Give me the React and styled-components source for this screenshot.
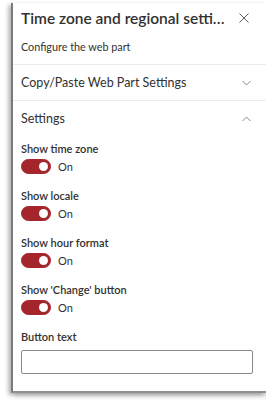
import React from 'react'
import styled, { createGlobalStyle } from 'styled-components'

const GlobalStyle = createGlobalStyle`
    html, body {
        margin: 0;
        padding: 0;
        background: #ffffff;
        overflow: hidden;
    }
    body {
        font-family: "Segoe UI", Lato, "Open Sans", sans-serif;
        color: #323130;
    }
`

const toggles = [
    { label: 'Show time zone' },
    { label: 'Show locale' },
    { label: 'Show hour format' },
    { label: "Show 'Change' button" },
]

const Chevron = ({ up }) => (
    <svg width="9" height="6" viewBox="0 0 9 6" fill="none">
        <path
            d={up ? 'M0.5 5L4.5 1L8.5 5' : 'M0.5 1L4.5 5L8.5 1'}
            stroke="#8a8886"
            strokeWidth="1"
        />
    </svg>
)

const Toggle = ({ on }) => (
    <ToggleRow>
        <Switch on={on}>
            <Knob on={on} />
        </Switch>
        <SwitchText>{on ? 'On' : 'Off'}</SwitchText>
    </ToggleRow>
)

const App = () => (
    <>
        <GlobalStyle />
        <Page>
            <Panel>
                <Header>
                    <Title>Time zone and regional settings</Title>
                    <CloseButton aria-label="Close">
                        <svg width="10" height="10" viewBox="0 0 10 10">
                            <path d="M0.5 0.5L9.5 9.5M9.5 0.5L0.5 9.5" stroke="#605e5c" strokeWidth="1" />
                        </svg>
                    </CloseButton>
                </Header>
                <Description>Configure the web part</Description>

                <GroupHeader>
                    <span>Copy/Paste Web Part Settings</span>
                    <Chevron />
                </GroupHeader>
                <GroupHeader>
                    <span>Settings</span>
                    <Chevron up />
                </GroupHeader>

                <Fields>
                    {toggles.map(t => (
                        <Field key={t.label}>
                            <FieldLabel>{t.label}</FieldLabel>
                            <Toggle on />
                        </Field>
                    ))}
                    <Field>
                        <FieldLabel>Button text</FieldLabel>
                        <TextInput type="text" />
                    </Field>
                </Fields>
            </Panel>
        </Page>
    </>
)

export default App

const Page = styled.div`
    width: 266px;
    height: 405px;
    overflow: hidden;
`

const Panel = styled.div`
    margin: 3px 0 0 11px;
    width: 255px;
    height: 390px;
    padding: 0 13px 0 8px;
    box-sizing: border-box;
    background: #ffffff;
    border-left: 2px solid #7a7a7a;
    border-bottom: 2px solid #8f8f8f;
    box-shadow: -3px 2px 4px rgba(0, 0, 0, 0.25), 2px 3px 5px rgba(0, 0, 0, 0.18);
    display: flex;
    flex-direction: column;
`

const Header = styled.div`
    display: flex;
    align-items: center;
    justify-content: space-between;
    height: 20px;
    margin-top: 5px;
`

const Title = styled.h1`
    margin: 0;
    font-size: 15.5px;
    font-weight: 600;
    line-height: 20px;
    white-space: nowrap;
    overflow: hidden;
    text-overflow: ellipsis;
    flex: 1;
    min-width: 0;
    color: #323130;
`

const CloseButton = styled.div`
    display: flex;
    align-items: center;
    justify-content: center;
    width: 20px;
    height: 20px;
    margin-left: 4px;
    margin-right: -1px;
`

const Description = styled.p`
    margin: 12px 0 0 0;
    font-size: 10.8px;
    line-height: 14px;
    padding-bottom: 10px;
    color: #323130;
`

const GroupHeader = styled.div`
    display: flex;
    align-items: center;
    justify-content: space-between;
    height: 35px;
    border-top: 1px solid #edebe9;
    margin: 0 -13px 0 -8px;
    padding: 0 13px 0 8px;
    font-size: 12.5px;
    color: #323130;
    svg {
        margin-right: 2px;
    }
`

const Fields = styled.div`
    display: flex;
    flex-direction: column;
    gap: 15px;
    margin-top: 6px;
`

const Field = styled.div`
    display: flex;
    flex-direction: column;
    gap: 3px;
`

const FieldLabel = styled.label`
    font-size: 11px;
    font-weight: 600;
    line-height: 14px;
    color: #323130;
`

const ToggleRow = styled.div`
    display: flex;
    align-items: center;
    gap: 7px;
`

const Switch = styled.div`
    width: 30px;
    height: 15px;
    border-radius: 8px;
    box-sizing: border-box;
    background: ${p => (p.on ? '#a4262c' : '#ffffff')};
    border: 1px solid ${p => (p.on ? '#a4262c' : '#605e5c')};
    display: flex;
    align-items: center;
    justify-content: ${p => (p.on ? 'flex-end' : 'flex-start')};
    padding: 0 2px;
`

const Knob = styled.div`
    width: 9px;
    height: 9px;
    border-radius: 50%;
    background: ${p => (p.on ? '#ffffff' : '#605e5c')};
`

const SwitchText = styled.span`
    font-size: 11px;
    line-height: 14px;
    color: #323130;
`

const TextInput = styled.input`
    box-sizing: border-box;
    width: 232px;
    height: 24px;
    margin: 3px 0 0 0;
    border: 1px solid #8a8886;
    border-radius: 2px;
    background: #ffffff;
    outline: none;
`
